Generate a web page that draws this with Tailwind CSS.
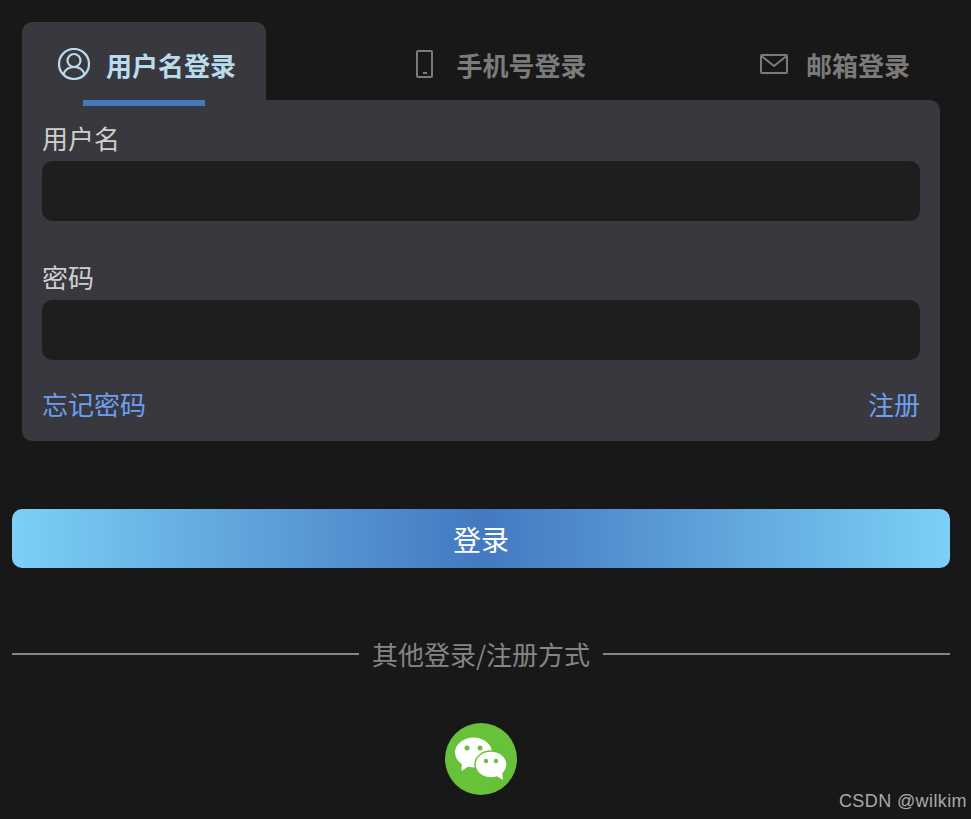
<!DOCTYPE html>
<html lang="zh-CN">
<head>
    <meta charset="UTF-8">
    <meta name="viewport" content="width=device-width, initial-scale=1.0">
    <title>登录</title>
    <script src="https://cdn.jsdelivr.net/npm/@tailwindcss/browser@4"></script>
</head>
<body class="relative h-[819px] overflow-hidden bg-[#181818] font-['Noto_Sans_CJK_SC','Liberation_Sans',sans-serif]">
    <div class="w-[962px] pl-[12px] pr-[12px] pt-[22px]">
        <!-- tabs -->
        <div class="mx-[10px] flex h-[78px] justify-between">
            <div class="relative flex h-[78px] w-[244px] items-center gap-[16px] rounded-t-[10px] bg-[#39383f] pl-[36px] pt-[6px] text-[26px] font-bold text-[#b8dcec]">
                <svg class="h-[32px] w-[32px]" viewBox="0 0 32 32" fill="none" stroke="currentColor" stroke-width="2.200">
                    <circle cx="16" cy="16" r="15"/>
                    <circle cx="16" cy="12.500" r="6.500"/>
                    <path d="M5.500 26.500c1.500-5 5.500-7.500 10.500-7.500s9 2.500 10.500 7.500"/>
                </svg>
                <span>用户名登录</span>
                <div class="absolute left-[61px] top-[78px] z-10 h-[6px] w-[122px] bg-[#4479c0]"></div>
            </div>
            <div class="flex h-[78px] w-[243px] items-center gap-[16px] pl-[36px] pt-[6px] text-[26px] font-bold text-[#7b7b7b]">
                <svg class="h-[32px] w-[32px]" viewBox="0 0 32 32" fill="none" stroke="currentColor" stroke-width="2">
                    <rect x="8" y="3" width="15" height="26" rx="1"/>
                    <path d="M14 25h4"/>
                </svg>
                <span>手机号登录</span>
            </div>
            <div class="flex h-[78px] w-[218px] items-center gap-[16px] pl-[36px] pt-[6px] text-[26px] font-bold text-[#7b7b7b]">
                <svg class="h-[32px] w-[32px]" viewBox="0 0 32 32" fill="none" stroke="currentColor" stroke-width="2">
                    <rect x="3" y="7" width="26" height="18" rx="1"/>
                    <path d="M3.500 8l12.500 10 12.500-10"/>
                </svg>
                <span>邮箱登录</span>
            </div>
        </div>

        <!-- form panel -->
        <div class="mx-[10px] h-[341px] rounded-b-[10px] rounded-tr-[10px] bg-[#39383f] px-[20px] pt-[17px] text-[26px] text-[#cfcfcf]">
            <div class="h-[44px] leading-[41px]">用户名</div>
            <div class="h-[60px] rounded-[10px] bg-[#1e1e1e]"></div>
            <div class="mt-[35px] h-[44px] leading-[41px]">密码</div>
            <div class="h-[60px] rounded-[10px] bg-[#1e1e1e]"></div>
            <div class="mt-[23px] flex h-[44px] justify-between leading-[41px] text-[#6b9ff0]">
                <span>忘记密码</span>
                <span>注册</span>
            </div>
        </div>

        <!-- login button -->
        <div class="mt-[68px] flex h-[59px] items-center justify-center rounded-[10px] bg-linear-to-r from-[#7cd0f7] via-[#4479c0] to-[#7cd0f7] text-[28px] text-white">登录</div>

        <!-- divider -->
        <div class="mt-[65px] flex h-[42px] items-center gap-[13px] text-[26px] text-[#858585]">
            <div class="h-[2px] flex-1 bg-[#858585]"></div>
            <span class="-translate-y-[1px]">其他登录/注册方式</span>
            <div class="h-[2px] flex-1 bg-[#858585]"></div>
        </div>

        <!-- wechat -->
        <div class="mt-[48px] flex justify-center">
            <svg class="h-[72px] w-[72px]" viewBox="0 0 72 72">
                <circle cx="36" cy="36" r="36" fill="#67c23a"/>
                <path d="M17 37l-.5 11 9-6z" fill="#fff"/>
                <ellipse cx="28.500" cy="29.500" rx="18.500" ry="15" fill="#fff"/>
                <circle cx="22" cy="25" r="2.500" fill="#67c23a"/>
                <circle cx="35" cy="25" r="2.500" fill="#67c23a"/>
                <ellipse cx="46" cy="41.500" rx="16" ry="13.500" fill="#fff" stroke="#67c23a" stroke-width="1.500"/>
                <path d="M50 52l8 5-1-9z" fill="#fff"/>
                <circle cx="41" cy="38" r="2.200" fill="#67c23a"/>
                <circle cx="51" cy="38" r="2.200" fill="#67c23a"/>
            </svg>
        </div>
    </div>
    <div class="absolute bottom-[7px] right-[4px] font-['Liberation_Sans',sans-serif] text-[18px] leading-[22px] tracking-[0.4px] text-[#aaaaaa]">CSDN @wilkim</div>
</body>
</html>
